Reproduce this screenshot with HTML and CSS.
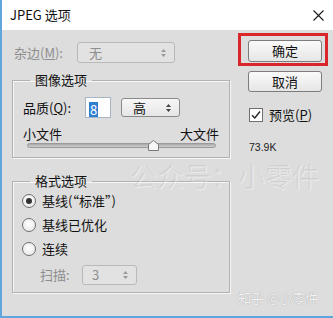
FILE: index.html
```html
<!DOCTYPE html>
<html lang="zh">
<head>
<meta charset="utf-8">
<title>JPEG 选项</title>
<link rel="stylesheet" href="styles.css">
</head>
<body>
<div class="window">
  <div class="titlebar">
    <span class="title">JPEG 选项</span>
    <svg class="close" width="11" height="11" viewBox="0 0 11 11"><path d="M0.5 0.5L10.5 10.5M10.5 0.5L0.5 10.5" stroke="#1a1a1a" stroke-width="1.1" fill="none"/></svg>
  </div>
  <div class="content">
    <div class="left">
      <div class="row matte">
        <span class="label disabled matte-label">杂边(<u>M</u>):</span>
        <div class="select disabled sel-matte"><span>无</span><svg class="arrows" width="5" height="8" viewBox="0 0 5 8"><path d="M2.5 0L5 3H0Z M2.5 8L5 5H0Z" fill="#9a9a9a"/></svg></div>
      </div>
      <fieldset class="group g1">
        <legend>图像选项</legend>
        <div class="row quality">
          <span class="label q-label">品质(<u>Q</u>):</span>
          <div class="input"><span class="hl">8</span></div>
          <div class="select sel-q"><span>高</span><svg class="arrows" width="5" height="8" viewBox="0 0 5 8"><path d="M2.5 0L5 3H0Z M2.5 8L5 5H0Z" fill="#444"/></svg></div>
        </div>
        <div class="sizes"><span>小文件</span><span>大文件</span></div>
        <div class="slider">
          <div class="track"></div>
          <svg class="thumb" width="11" height="11" viewBox="0 0 11 11"><path d="M5.5 0.5L10.5 4.5V10.5H0.5V4.5Z" fill="#f6f6f6" stroke="#7a7a7a" stroke-width="1"/></svg>
        </div>
      </fieldset>
      <fieldset class="group g2">
        <legend>格式选项</legend>
        <div class="radio-row"><span class="radio checked"></span><span>基线(“标准”)</span></div>
        <div class="radio-row"><span class="radio"></span><span>基线已优化</span></div>
        <div class="radio-row"><span class="radio"></span><span>连续</span></div>
        <div class="row scan">
          <span class="label disabled scan-label">扫描:</span>
          <div class="select disabled sel-scan"><span>3</span><svg class="arrows" width="5" height="8" viewBox="0 0 5 8"><path d="M2.5 0L5 3H0Z M2.5 8L5 5H0Z" fill="#9a9a9a"/></svg></div>
        </div>
      </fieldset>
    </div>
    <div class="right">
      <div class="highlight"><div class="btn">确定</div></div>
      <div class="btn cancel">取消</div>
      <div class="preview">
        <span class="checkbox"><svg width="12" height="12" viewBox="0 0 12 12"><path d="M2 6.2L4.8 9L10 2.5" stroke="#222" stroke-width="1.4" fill="none"/></svg></span>
        <span>预览(<u>P</u>)</span>
      </div>
      <div class="filesize">73.9K</div>
    </div>
    <div class="wm">公众号：小零件</div>
    <div class="zhihu">知乎 @小零件</div>
  </div>
</div>
</body>
</html>
```

FILE: styles.css
```css
* { box-sizing: border-box; }
html, body { margin: 0; padding: 0; }
body {
  width: 333px;
  height: 318px;
  overflow: hidden;
  font-family: "Noto Sans CJK SC", "Noto Sans", sans-serif;
  font-size: 13px;
  color: #111;
}
.window {
  width: 333px;
  height: 318px;
  display: flex;
  flex-direction: column;
  border-left: 2px solid #5ea6dc;
  border-bottom: 2px solid #5ea6dc;
}
.titlebar {
  height: 30px;
  flex: none;
  background: #fff;
  display: flex;
  align-items: center;
  justify-content: space-between;
  padding: 0 9px 0 8px;
}
.title { font-size: 13px; line-height: 16px; color: #111; }
.close { display: block; }
.content {
  flex: 1;
  background: #dddddd;
  display: flex;
  position: relative;
}
.left {
  width: 230px;
  flex: none;
  display: flex;
  flex-direction: column;
}
.row { display: flex; align-items: center; }
.label { line-height: 16px; }
.disabled { color: #8e8e8e; }
u { text-decoration: underline; text-underline-offset: 1px; }
.matte { margin-top: 12px; padding-left: 12px; height: 21px; }
.matte-label { width: 63px; }
.select {
  height: 20px;
  border: 1px solid #8a8a8a;
  border-radius: 3px;
  background: linear-gradient(#f7f7f7, #e6e6e6);
  display: flex;
  align-items: center;
  justify-content: space-between;
  padding: 0 8px 0 11px;
  line-height: 16px;
}
.select.disabled {
  border-color: #b9b9b9;
  background: #e2e2e2;
}
.arrows { display: block; }
.sel-matte { width: 98px; height: 21px; }
.group {
  margin: 0 0 0 10px;
  width: 218px;
  border: 1px solid #b2b2b2;
  box-shadow: inset 1px 1px 0 #f6f6f6, 1px 1px 0 #f6f6f6;
  min-width: 0;
}
.group legend {
  padding: 0 5px;
  line-height: 16px;
  color: #111;
}
.g1 { margin-top: 9px; padding: 9px 10px 6px 10px; }
.g1 legend { margin-left: 7px; }
.quality { height: 21px; }
.q-label { width: 62px; }
.input {
  width: 26px;
  height: 21px;
  background: #fff;
  border: 1px solid #a7b4c2;
  padding: 2px 0 0 3px;
}
.hl {
  display: inline-block;
  background: #2f7fd0;
  color: #fff;
  line-height: 15px;
  padding: 0 1px;
}
.sel-q { width: 59px; margin-left: 10px; height: 19px; }
.sizes {
  display: flex;
  justify-content: space-between;
  margin-top: 8px;
  line-height: 15px;
}
.slider {
  position: relative;
  height: 11px;
  margin-top: -1px;
  padding-top: 3px;
}
.track {
  margin-left: 4px;
  width: 189px;
  height: 5px;
  border-radius: 3px;
  background: linear-gradient(#a9a9a9, #cfcfcf);
  border: 1px solid #9a9a9a;
}
.thumb { position: absolute; left: 125px; top: 0; }
.g2 { margin-top: 15px; padding: 0 10px 7px 9px; }
.g2 legend { margin-left: 8px; }
.radio-row {
  height: 24px;
  display: flex;
  align-items: center;
  line-height: 16px;
}
.radio {
  width: 14px;
  height: 14px;
  border-radius: 50%;
  border: 1px solid #6f6f6f;
  background: radial-gradient(circle at 50% 40%, #ffffff, #e4e4e4);
  margin-right: 6px;
  position: relative;
  flex: none;
}
.radio.checked::after {
  content: "";
  position: absolute;
  left: 3px;
  top: 3px;
  width: 6px;
  height: 6px;
  border-radius: 50%;
  background: #333;
}
.scan { margin-top: 4px; padding-left: 18px; height: 20px; }
.scan-label { width: 42px; }
.sel-scan { width: 55px; padding-left: 9px; }
.right {
  flex: 1;
  display: flex;
  flex-direction: column;
}
.highlight {
  margin: 3px 0 0 6px;
  width: 90px;
  height: 33px;
  border: 3px solid #d8262b;
  padding: 4px 3px 1px 7px;
}
.btn {
  width: 74px;
  height: 22px;
  border: 1px solid #7c7c7c;
  border-radius: 3px;
  background: linear-gradient(#fafafa, #e6e6e6);
  display: flex;
  align-items: center;
  justify-content: center;
  line-height: 16px;
  color: #111;
}
.cancel { margin: 5px 0 0 16px; height: 21px; }
.preview {
  margin: 15px 0 0 17px;
  height: 16px;
  display: flex;
  align-items: center;
  line-height: 16px;
}
.checkbox {
  width: 14px;
  height: 14px;
  border: 1px solid #6f6f6f;
  background: #fff;
  margin-right: 6px;
  display: flex;
  align-items: center;
  justify-content: center;
}
.checkbox svg { display: block; }
.filesize {
  margin: 17px 0 0 17px;
  font-family: "Liberation Sans", Arial, sans-serif;
  font-size: 10.5px;
  line-height: 14px;
  color: #222;
}
.wm {
  position: absolute;
  left: 128px;
  top: 128px;
  font-size: 27px;
  line-height: 36px;
  color: rgba(0, 0, 0, 0.06);
  text-shadow: 1px 1px 0 rgba(255, 255, 255, 0.35);
  white-space: nowrap;
  pointer-events: none;
}
.zhihu {
  position: absolute;
  left: 236px;
  top: 259px;
  font-size: 13px;
  line-height: 18px;
  color: #f4f4f4;
  text-shadow: 0 0 1px rgba(0, 0, 0, 0.35);
  white-space: nowrap;
}
```
